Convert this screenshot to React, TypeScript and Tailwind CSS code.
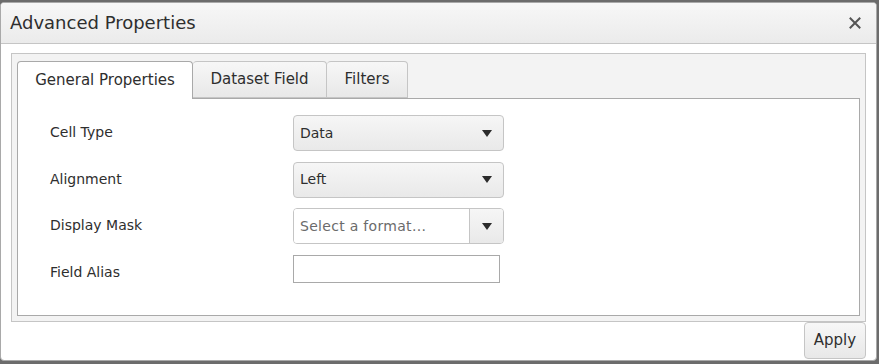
const font = { fontFamily: '"DejaVu Sans", "Open Sans", sans-serif' }

type DropProps = {
  value: string
}

const Arrow = () => (
  <svg width="10" height="7" viewBox="0 0 10 7" className="shrink-0">
    <path d="M0 0 L10 0 L5 7 Z" fill="#2b2b2b" />
  </svg>
)

const DropDown: React.FC<DropProps> = ({ value }) => {
  return (
    <div className="w-[211px] h-[36px] flex items-center justify-between pl-[6px] pr-[11px] rounded-[4px] border border-[#c5c5c5] bg-gradient-to-b from-[#f6f6f6] to-[#e9e9e9] text-[14px] text-[#2e2e2e]">
      <span>{value}</span>
      <Arrow />
    </div>
  )
}

const ComboBox = () => (
  <div className="w-[211px] h-[36px] flex rounded-[4px] border border-[#c5c5c5] overflow-hidden text-[14px]">
    <div className="flex-1 flex items-center pl-[6px] bg-white text-[#6b6b6b] tracking-[0.3px]">Select a format...</div>
    <div className="w-[34px] flex items-center justify-center border-l border-[#c5c5c5] bg-gradient-to-b from-[#f6f6f6] to-[#e9e9e9]">
      <Arrow />
    </div>
  </div>
)

const Row: React.FC<{ label: string; children: React.ReactNode }> = ({ label, children }) => (
  <div className="flex h-[36px] items-start">
    <div className="w-[243px] h-[36px] flex items-center pb-[1px] text-[14px] text-[#2e2e2e]">{label}</div>
    {children}
  </div>
)

export default function App() {
  return (
    <div className="w-[879px] h-[364px] bg-[#6c6c6c] pt-[2px]" style={font}>
      <div className="w-[877px] h-[359px] flex flex-col rounded-[4px] border border-[#a9a9a9] bg-white overflow-hidden">
        <div className="h-[41px] shrink-0 flex items-center justify-between pl-[9px] pr-[15px] border-b border-[#c5c5c5] bg-gradient-to-b from-[#f7f7f7] to-[#ebebeb]">
          <span className="text-[18px] text-[#2e2e2e] pb-[1px]">Advanced Properties</span>
          <svg width="12" height="12" viewBox="0 0 12 12">
            <path d="M1.5 1.5 L10.5 10.5 M10.5 1.5 L1.5 10.5" stroke="#555" strokeWidth="2" strokeLinecap="square" />
          </svg>
        </div>

        <div className="flex-1 flex flex-col px-[10px] pt-[9px]">
          <div className="h-[269px] flex flex-col border border-[#c5c5c5] bg-[#f3f3f3] pt-[7px] px-[5px] pb-[5px]">
            <div className="flex h-[37px] text-[15px] text-[#2e2e2e] relative z-10">
              <div className="w-[176px] h-[38px] flex items-center justify-center pb-[1px] bg-white border border-b-0 border-[#a9a9a9] rounded-t-[4px]">
                General Properties
              </div>
              <div className="w-[134px] h-[37px] flex items-center justify-center pb-[1px] border border-l-0 border-[#c5c5c5] rounded-t-[4px] bg-gradient-to-b from-[#f7f7f7] to-[#e8e8e8]">
                Dataset Field
              </div>
              <div className="w-[81px] h-[37px] flex items-center justify-center pb-[1px] border border-l-0 border-[#c5c5c5] rounded-t-[4px] bg-gradient-to-b from-[#f7f7f7] to-[#e8e8e8]">
                Filters
              </div>
            </div>
            <div className="flex-1 flex flex-col gap-[10.5px] border border-[#a9a9a9] bg-white pt-[16px] pl-[32px]">
              <Row label="Cell Type">
                <DropDown value="Data" />
              </Row>
              <Row label="Alignment">
                <DropDown value="Left" />
              </Row>
              <Row label="Display Mask">
                <ComboBox />
              </Row>
              <Row label="Field Alias">
                <div className="w-[207px] h-[28px] border border-[#a9a9a9] bg-white" />
              </Row>
            </div>
          </div>
          <div className="flex justify-end">
            <button className="w-[62px] h-[37px] rounded-[4px] border border-[#c5c5c5] bg-gradient-to-b from-[#f7f7f7] to-[#e8e8e8] text-[15px] text-[#2e2e2e]">
              Apply
            </button>
          </div>
        </div>
      </div>
    </div>
  )
}
